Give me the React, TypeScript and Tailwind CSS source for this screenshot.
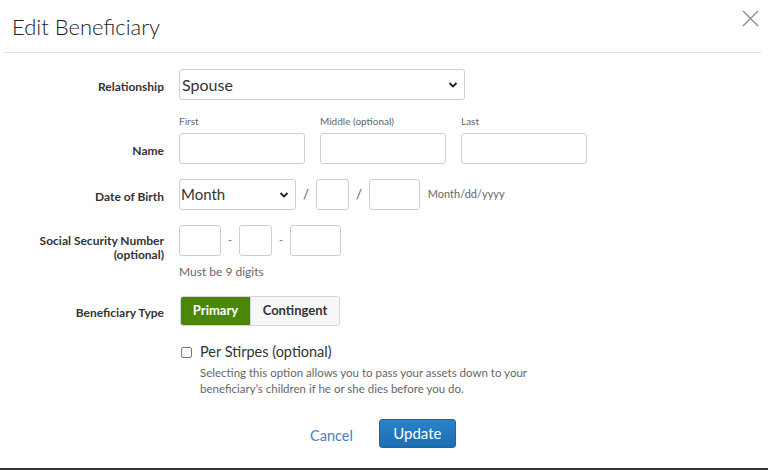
import { useState } from "react";

const font = { fontFamily: '"Lato", "Open Sans", sans-serif' };

function Chevron() {
  return (
    <svg width="10" height="7" viewBox="0 0 10 7" className="absolute right-[6px] top-1/2 -translate-y-1/2">
      <path d="M1.5 1.5 L5 5 L8.5 1.5" fill="none" stroke="#222" strokeWidth="1.8" />
    </svg>
  );
}

function Row({
  label,
  className = "",
  children,
}: {
  label?: React.ReactNode;
  className?: string;
  children: React.ReactNode;
}) {
  return (
    <div className={`flex items-center gap-[15px] ${className}`}>
      <div className="w-[164px] shrink-0 pt-[3px] text-right text-[12px] font-bold leading-[13px] text-[#333]">
        {label}
      </div>
      {children}
    </div>
  );
}

function Box({ w }: { w: string }) {
  return <div className={`h-[31px] rounded-[3px] border border-[#cfcfcf] bg-white ${w}`} />;
}

export default function App() {
  const [type, setType] = useState<"primary" | "contingent">("primary");

  return (
    <div style={font} className="relative h-[470px] w-[768px] overflow-hidden border-b-2 border-[#333] bg-white">
      <div className="ml-[4px] mr-[7px] flex h-[53px] items-center justify-between border-b border-[#e3e3e3] pl-[8px]">
        <h1 className="text-[22px] font-light text-[#222]">Edit Beneficiary</h1>
        <svg width="17" height="17" viewBox="0 0 17 17" className="mb-[16px] mr-[2px]">
          <path d="M1 1 L16 16 M16 1 L1 16" stroke="#8c8c8c" strokeWidth="1.4" />
        </svg>
      </div>

      <div className="flex flex-col pt-[16px] text-[#333]">
        <Row label="Relationship">
          <div className="relative flex h-[31px] w-[286px] items-center rounded-[3px] border border-[#cfcfcf] px-[2px] text-[16px]">
            Spouse
            <Chevron />
          </div>
        </Row>

        <Row className="mt-[15px]">
          <div className="flex h-[12px] items-center gap-[15px] text-[10px] text-[#666]">
            <span className="w-[126px]">First</span>
            <span className="w-[126px]">Middle (optional)</span>
            <span className="w-[126px]">Last</span>
          </div>
        </Row>

        <Row label="Name" className="mt-[6px]">
          <div className="flex gap-[15px]">
            <Box w="w-[126px]" />
            <Box w="w-[126px]" />
            <Box w="w-[126px]" />
          </div>
        </Row>

        <Row label="Date of Birth" className="mt-[15px]">
          <div className="flex items-center text-[#555]">
            <div className="relative flex h-[31px] w-[117px] items-center rounded-[3px] border border-[#cfcfcf] px-[1px] text-[15px] text-[#333]">
              Month
              <Chevron />
            </div>
            <span className="mx-[7px] text-[13px]">/</span>
            <Box w="w-[33px]" />
            <span className="mx-[7px] text-[13px]">/</span>
            <Box w="w-[51px]" />
            <span className="ml-[8px] text-[11px] text-[#666]">Month/dd/yyyy</span>
          </div>
        </Row>

        <div className="mt-[15px] flex h-[31px] items-start gap-[15px]">
          <div className="w-[164px] shrink-0 pt-[9px] text-right text-[12px] font-bold leading-[13.5px] text-[#333]">
            <div>Social Security Number</div>
            <div>(optional)</div>
          </div>
          <div className="flex items-center text-[#777]">
            <Box w="w-[42px]" />
            <span className="mx-[7px] text-[11px]">-</span>
            <Box w="w-[33px]" />
            <span className="mx-[7px] text-[11px]">-</span>
            <Box w="w-[51px]" />
          </div>
        </div>

        <Row className="mt-[8px]">
          <div className="text-[12px] leading-[16px] text-[#666]">Must be 9 digits</div>
        </Row>

        <Row label="Beneficiary Type" className="mt-[16px]">
          <div className="ml-[1px] flex h-[30px] w-[160px] overflow-hidden rounded-[3px] border border-[#d6d6d6] text-[13px] font-bold">
            <button
              type="button"
              onClick={() => setType("primary")}
              className={`w-[69px] ${type === "primary" ? "bg-[#4a8707] text-white" : "bg-[#f7f7f7] text-[#333]"}`}
            >
              Primary
            </button>
            <button
              type="button"
              onClick={() => setType("contingent")}
              className={`flex-1 border-l border-[#d6d6d6] ${type === "contingent" ? "bg-[#4a8707] text-white" : "bg-[#f7f7f7] text-[#333]"}`}
            >
              Contingent
            </button>
          </div>
        </Row>

        <Row className="mt-[16px]">
          <label className="flex h-[20px] items-center gap-[8px] text-[14.5px] text-[#333]">
            <span className="ml-[2px] h-[11px] w-[11px] rounded-[2px] border-[1.5px] border-[#777]" />
            Per Stirpes (optional)
          </label>
        </Row>

        <Row className="mt-[3px]">
          <p className="ml-[21px] w-[340px] text-[11.5px] leading-[16px] text-[#666]">
            Selecting this option allows you to pass your assets down to your beneficiary’s children if he or she dies before you do.
          </p>
        </Row>
      </div>

      <div className="mt-[22px] flex items-center pl-[310px]">
        <button type="button" className="mt-[4px] text-[14.5px] text-[#4a7fbf]">
          Cancel
        </button>
        <button
          type="button"
          className="ml-[26px] h-[29px] w-[77px] rounded-[3px] border border-[#1a66a8] bg-gradient-to-b from-[#2a82c9] to-[#1b6fb4] text-[15px] text-white"
        >
          Update
        </button>
      </div>
    </div>
  );
}
